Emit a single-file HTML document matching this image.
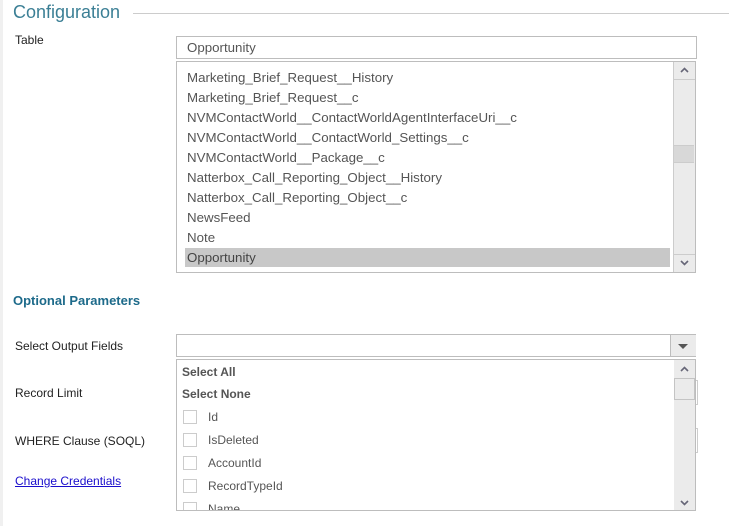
<!DOCTYPE html>
<html><head><style>
body{margin:0;width:729px;height:526px;background:#fff;font-family:"Liberation Sans",sans-serif;position:relative;overflow:hidden;color:#333}
.a{position:absolute}
.lbl{font-size:12px;color:#222;left:15px}
.box{border:1px solid #bdbdbd;background:#fff;box-sizing:border-box}
.it{position:absolute;left:10px;font-size:13.3px;color:#555;height:20px;line-height:20px}
.ck{position:absolute;left:6px;width:14px;height:14px;border:1px solid #ccc;box-sizing:border-box}
.ct{position:absolute;left:31px;font-size:12px;color:#555}
svg{position:absolute}
</style></head><body>
<div class="a" style="left:0;top:0;width:3px;height:526px;background:#f0f0f0"></div>
<div class="a" style="left:13px;top:2px;font-size:18px;color:#3b7f95">Configuration</div>
<div class="a" style="left:133px;top:13px;width:596px;height:1px;background:#ccc"></div>
<div class="a lbl" style="top:33px">Table</div>
<div class="a box" style="left:176px;top:36px;width:521px;height:23px"><span style="position:absolute;left:10px;top:3px;font-size:13.3px;color:#555">Opportunity</span></div>
<div class="a box" style="left:176px;top:61px;width:520px;height:212px;overflow:hidden">
<div class="it" style="top:6px">Marketing_Brief_Request__History</div>
<div class="it" style="top:26px">Marketing_Brief_Request__c</div>
<div class="it" style="top:46px">NVMContactWorld__ContactWorldAgentInterfaceUri__c</div>
<div class="it" style="top:66px">NVMContactWorld__ContactWorld_Settings__c</div>
<div class="it" style="top:86px">NVMContactWorld__Package__c</div>
<div class="it" style="top:106px">Natterbox_Call_Reporting_Object__History</div>
<div class="it" style="top:126px">Natterbox_Call_Reporting_Object__c</div>
<div class="it" style="top:146px">NewsFeed</div>
<div class="it" style="top:166px">Note</div>
<div class="a" style="left:8px;top:186px;width:485px;height:19px;background:#c8c8c8"></div>
<div class="it" style="top:186px;color:#444">Opportunity</div>
<div class="a" style="left:496px;top:0;width:21px;height:210px;background:#ebebeb;border-left:1px solid #ccc">
<div class="a" style="left:0;top:17px;width:21px;height:1px;background:#ccc"></div>
<div class="a" style="left:0;top:83px;width:20px;height:16px;background:#d8d8d8;border-top:1px solid #ccc;border-bottom:1px solid #ccc"></div>
<div class="a" style="left:0;top:192px;width:21px;height:1px;background:#ccc"></div>
<svg style="left:6px;top:5px" width="9" height="6"><path d="M1 5L4.5 1.5L8 5" stroke="#667" stroke-width="1.6" fill="none"/></svg>
<svg style="left:6px;top:198px" width="9" height="6"><path d="M1 1L4.5 4.5L8 1" stroke="#667" stroke-width="1.6" fill="none"/></svg>
</div>
</div>
<div class="a" style="left:13px;top:293px;font-size:13px;font-weight:bold;color:#1d6a8a">Optional Parameters</div>
<div class="a lbl" style="top:339px">Select Output Fields</div>
<div class="a lbl" style="top:386px">Record Limit</div>
<div class="a lbl" style="top:434px">WHERE Clause (SOQL)</div>
<div class="a lbl" style="top:474px;color:#1a0dcc;text-decoration:underline">Change Credentials</div>
<div class="a box" style="left:176px;top:334px;width:520px;height:23px">
<div class="a" style="left:493px;top:0;width:25px;height:21px;background:#ebebeb;border-left:1px solid #bdbdbd"></div>
<div class="a" style="left:501px;top:9px;width:0;height:0;border-left:5px solid transparent;border-right:5px solid transparent;border-top:5px solid #555"></div>
</div>
<div class="a" style="left:694px;top:380px;width:3px;height:23px;border:1px solid #ccc;border-left:none"></div>
<div class="a" style="left:694px;top:428px;width:3px;height:23px;border:1px solid #ccc;border-left:none"></div>
<div class="a box" style="left:176px;top:359px;width:520px;height:152px;overflow:hidden">
<div class="ct" style="left:5px;top:5px;font-weight:bold">Select All</div>
<div class="ct" style="left:5px;top:27px;font-weight:bold">Select None</div>
<div class="ck" style="top:50px"></div><div class="ct" style="top:50px">Id</div>
<div class="ck" style="top:73px"></div><div class="ct" style="top:73px">IsDeleted</div>
<div class="ck" style="top:96px"></div><div class="ct" style="top:96px">AccountId</div>
<div class="ck" style="top:119px"></div><div class="ct" style="top:119px">RecordTypeId</div>
<div class="ck" style="top:142px"></div><div class="ct" style="top:142px">Name</div>
<div class="a" style="left:497px;top:0;width:21px;height:150px;background:#ebebeb">
<div class="a" style="left:0;top:18px;width:19px;height:20px;border:1px solid #c4c4c4;background:#ebebeb"></div>
<svg style="left:6px;top:6px" width="9" height="6"><path d="M1 5L4.5 1.5L8 5" stroke="#667" stroke-width="1.6" fill="none"/></svg>
<svg style="left:6px;top:140px" width="9" height="6"><path d="M1 1L4.5 4.5L8 1" stroke="#667" stroke-width="1.6" fill="none"/></svg>
</div>
</div>
</body></html>
